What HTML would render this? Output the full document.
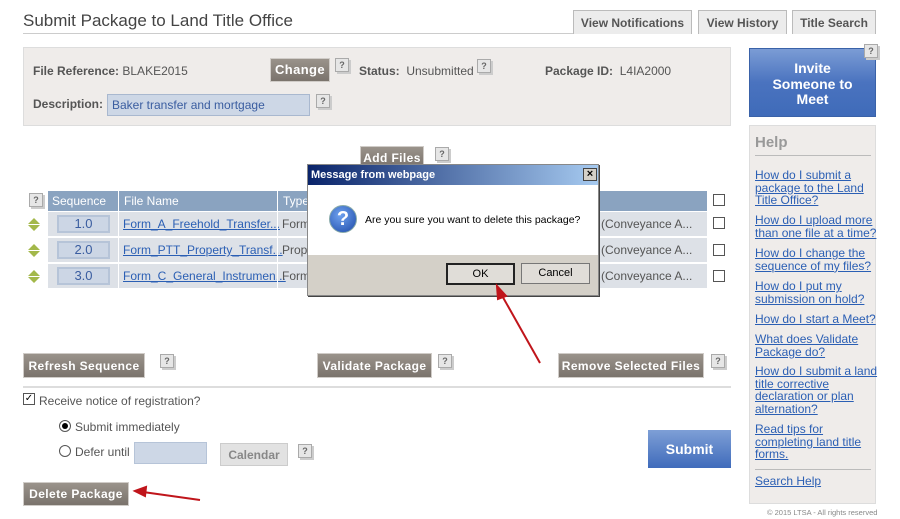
<!DOCTYPE html>
<html><head><meta charset="utf-8"><style>
*{margin:0;padding:0;box-sizing:border-box}
body{width:900px;height:519px;background:#fff;font-family:"Liberation Sans",sans-serif;font-size:12px;color:#555;position:relative;overflow:hidden}
.a{position:absolute;white-space:nowrap}
.q{position:absolute;width:14px;height:14px;background:#e6e6e6;border:1px solid #aaa;box-shadow:2px 2px 0 #ccc;font:bold 9px "Liberation Sans",sans-serif;color:#666;text-align:center;line-height:12px}
.btn{position:absolute;white-space:nowrap;background:linear-gradient(#9a938b,#7a736c);color:#fff;font:bold 12px "Liberation Sans",sans-serif;letter-spacing:0.4px;text-align:center;border:1px solid #d0ccc8}
.tab{position:absolute;top:10px;height:24px;background:#ececec;border:1px solid #bbb;border-bottom:none;font:bold 12px "Liberation Sans",sans-serif;color:#555;text-align:center;line-height:24px}
.lk{color:#2b5fb4;text-decoration:underline}
.cb{position:absolute;width:12px;height:12px;border:1px solid #555;background:#fff}
.row{position:absolute;left:48px;width:659px;height:24px;background:#dde1e7}
.seq{position:absolute;left:9px;top:3px;width:53px;height:18px;border:2px solid #b6c4d8;background:#ccd6e5;color:#3a5da0;text-align:center;line-height:14px;font-size:13px}
.arr{position:absolute;left:28px;width:12px;height:13px}
.hl{position:absolute;left:755px;white-space:nowrap;color:#2b5fb4;text-decoration:underline;font-size:12px;line-height:12.7px}
</style></head><body>
<div class="a" style="left:23px;top:11px;font:17px 'Liberation Sans',sans-serif;color:#444">Submit Package to Land Title Office</div>
<div class="a" style="left:23px;top:33px;width:550px;height:1px;background:#ccc"></div>
<div class="tab" style="left:573px;width:119px">View Notifications</div>
<div class="tab" style="left:698px;width:89px">View History</div>
<div class="tab" style="left:792px;width:84px">Title Search</div>

<div class="a" style="left:23px;top:47px;width:708px;height:79px;background:#efecea;border:1px solid #ddd"></div>
<div class="a" style="left:33px;top:64px"><b>File Reference:</b> BLAKE2015</div>
<div class="btn" style="left:270px;top:58px;width:60px;height:24px;line-height:22px;font-size:13px">Change</div>
<div class="q" style="left:335px;top:58px">?</div>
<div class="a" style="left:359px;top:64px"><b>Status:</b>&nbsp; Unsubmitted</div>
<div class="q" style="left:477px;top:59px">?</div>
<div class="a" style="left:545px;top:64px"><b>Package ID:</b>&nbsp; L4IA2000</div>
<div class="a" style="left:33px;top:97px"><b>Description:</b></div>
<div class="a" style="left:107px;top:94px;width:203px;height:22px;background:#cdd7e6;border:1px solid #a9b8cf;color:#3a5da0;padding-left:4px;line-height:20px">Baker transfer and mortgage</div>
<div class="q" style="left:316px;top:94px">?</div>

<div class="btn" style="left:360px;top:146px;width:64px;height:22px;line-height:22px;font-size:12px">Add Files</div>
<div class="q" style="left:435px;top:147px">?</div>

<div class="q" style="left:29px;top:193px">?</div>
<div class="a" style="left:48px;top:191px;width:659px;height:20px;background:#8aa3c0;color:#fff;font-size:12px;line-height:20px">
<span class="a" style="left:4px">Sequence</span><span class="a" style="left:70px;top:0;height:20px;border-left:1px solid #fff;padding-left:5px">File Name</span><span class="a" style="left:229px;top:0;height:20px;border-left:1px solid #fff;padding-left:5px">Type</span></div>
<div class="cb" style="left:713px;top:194px"></div>

<div class="row" style="top:212px"><div class="seq">1.0</div><span class="a lk" style="left:75px;top:5px">Form_A_Freehold_Transfer...</span><span class="a" style="left:234px;top:5px">Form</span><span class="a" style="left:553px;top:5px">(Conveyance A...</span></div>
<div class="row" style="top:238px"><div class="seq">2.0</div><span class="a lk" style="left:75px;top:5px">Form_PTT_Property_Transf...</span><span class="a" style="left:234px;top:5px">Prope</span><span class="a" style="left:553px;top:5px">(Conveyance A...</span></div>
<div class="row" style="top:264px"><div class="seq">3.0</div><span class="a lk" style="left:75px;top:5px">Form_C_General_Instrumen...</span><span class="a" style="left:234px;top:5px">Form</span><span class="a" style="left:553px;top:5px">(Conveyance A...</span></div>
<div class="a" style="left:118px;top:191px;width:1px;height:97px;background:#fff"></div>
<div class="a" style="left:277px;top:191px;width:1px;height:97px;background:#fff"></div>
<div class="cb" style="left:713px;top:217px"></div><div class="cb" style="left:713px;top:244px"></div><div class="cb" style="left:713px;top:270px"></div>
<svg class="arr" style="top:218px" viewBox="0 0 12 13"><path d="M6 0L12 6H0Z M6 13L12 7H0Z" fill="#a3b84a"/></svg>
<svg class="arr" style="top:244px" viewBox="0 0 12 13"><path d="M6 0L12 6H0Z M6 13L12 7H0Z" fill="#a3b84a"/></svg>
<svg class="arr" style="top:270px" viewBox="0 0 12 13"><path d="M6 0L12 6H0Z M6 13L12 7H0Z" fill="#a3b84a"/></svg>

<!-- dialog -->
<div class="a" style="left:307px;top:164px;width:292px;height:132px;background:#d4d0c8;border:1px solid #888;box-shadow:1px 1px 0 #444">
 <div style="height:20px;background:linear-gradient(90deg,#0a246a,#a6caf0);color:#fff;font:bold 11px 'Liberation Sans',sans-serif;line-height:20px;padding-left:3px">Message from webpage</div>
 <div class="a" style="left:275px;top:3px;width:14px;height:13px;background:#d4d0c8;border:1px solid #444;font:bold 11px sans-serif;text-align:center;line-height:11px;color:#000">×</div>
 <div style="height:70px;background:#fff;position:relative">
  <div class="a" style="left:21px;top:20px;width:28px;height:28px;border-radius:50%;background:radial-gradient(circle at 40% 35%,#6fa2ef,#1d4aa8);border:1px solid #8aa;color:#fff;font:bold 20px 'Liberation Sans',sans-serif;text-align:center;line-height:27px">?</div>
  <div class="a" style="left:57px;top:29px;color:#000;font-size:10.5px">Are you sure you want to delete this package?</div>
 </div>
 <div class="a" style="left:138px;top:98px;width:69px;height:22px;border:2px solid #222;background:#e0ddd8;color:#000;text-align:center;line-height:18px;font-size:11px">OK</div>
 <div class="a" style="left:213px;top:98px;width:69px;height:21px;border:1px solid #777;background:#e0ddd8;color:#000;text-align:center;line-height:19px;font-size:11px">Cancel</div>
</div>

<div class="btn" style="left:23px;top:353px;width:122px;height:25px;line-height:24px">Refresh Sequence</div>
<div class="q" style="left:160px;top:354px">?</div>
<div class="btn" style="left:317px;top:353px;width:115px;height:25px;line-height:24px">Validate Package</div>
<div class="q" style="left:438px;top:354px">?</div>
<div class="btn" style="left:558px;top:353px;width:146px;height:25px;line-height:24px">Remove Selected Files</div>
<div class="q" style="left:711px;top:354px">?</div>
<div class="a" style="left:23px;top:386px;width:708px;height:2px;background:#ddd"></div>

<div class="cb" style="left:23px;top:393px;font-size:10px;line-height:10px;color:#000;text-align:center">✓</div>
<div class="a" style="left:39px;top:394px">Receive notice of registration?</div>
<div class="a" style="left:59px;top:420px;width:12px;height:12px;border:1px solid #555;border-radius:50%;background:#fff"><div style="margin:2px;width:6px;height:6px;border-radius:50%;background:#000"></div></div>
<div class="a" style="left:75px;top:420px">Submit immediately</div>
<div class="a" style="left:59px;top:445px;width:12px;height:12px;border:1px solid #555;border-radius:50%;background:#fff"></div>
<div class="a" style="left:75px;top:445px">Defer until</div>
<div class="a" style="left:134px;top:442px;width:73px;height:22px;background:#cdd7e6;border:1px solid #b6c4d8"></div>
<div class="a" style="left:220px;top:443px;width:68px;height:23px;background:#e2e2e2;border:1px solid #ccc;color:#888;font-weight:bold;text-align:center;line-height:22px">Calendar</div>
<div class="q" style="left:298px;top:444px">?</div>
<div class="a" style="left:648px;top:430px;width:83px;height:38px;background:linear-gradient(#7e9fd6,#3f6bbb);color:#fff;font:bold 14px 'Liberation Sans',sans-serif;text-align:center;line-height:38px">Submit</div>
<div class="btn" style="left:23px;top:482px;width:106px;height:24px;line-height:23px">Delete Package</div>

<svg class="a" style="left:0;top:0" width="900" height="519"><g stroke="#c0151b" stroke-width="2" fill="#c0151b"><line x1="540" y1="363" x2="500" y2="292"/><path d="M497 286L506 296L498 299Z"/><line x1="200" y1="500" x2="143" y2="492"/><path d="M135 491L146 487L145 496Z"/></g></svg>

<div class="a" style="left:749px;top:48px;width:127px;height:69px;background:linear-gradient(#7b9cd5 0%,#4a73bf 50%,#3f6bb9);border:1px solid #3a62a8;color:#fff;font:bold 14px 'Liberation Sans',sans-serif;text-align:center;line-height:15.5px;padding-top:12px;white-space:normal">Invite<br>Someone to<br>Meet</div>
<div class="q" style="left:864px;top:44px">?</div>

<div class="a" style="left:749px;top:125px;width:127px;height:379px;background:#efecea;border:1px solid #ddd"></div>
<div class="a" style="left:755px;top:134px;font:bold 15px 'Liberation Sans',sans-serif;color:#999">Help</div>
<div class="a" style="left:755px;top:155px;width:116px;height:1px;background:#bbb"></div>
<a class="hl" style="top:169px">How do I submit a<br>package to the Land<br>Title Office?</a>
<a class="hl" style="top:214px">How do I upload more<br>than one file at a time?</a>
<a class="hl" style="top:247px">How do I change the<br>sequence of my files?</a>
<a class="hl" style="top:280px">How do I put my<br>submission on hold?</a>
<a class="hl" style="top:313px">How do I start a Meet?</a>
<a class="hl" style="top:333px">What does Validate<br>Package do?</a>
<a class="hl" style="top:365px">How do I submit a land<br>title corrective<br>declaration or plan<br>alternation?</a>
<a class="hl" style="top:423px">Read tips for<br>completing land title<br>forms.</a>
<div class="a" style="left:755px;top:469px;width:116px;height:1px;background:#bbb"></div>
<a class="hl" style="top:475px">Search Help</a>
<div class="a" style="left:767px;top:508px;font-size:7.5px;color:#888">© 2015 LTSA - All rights reserved</div>
</body></html>
